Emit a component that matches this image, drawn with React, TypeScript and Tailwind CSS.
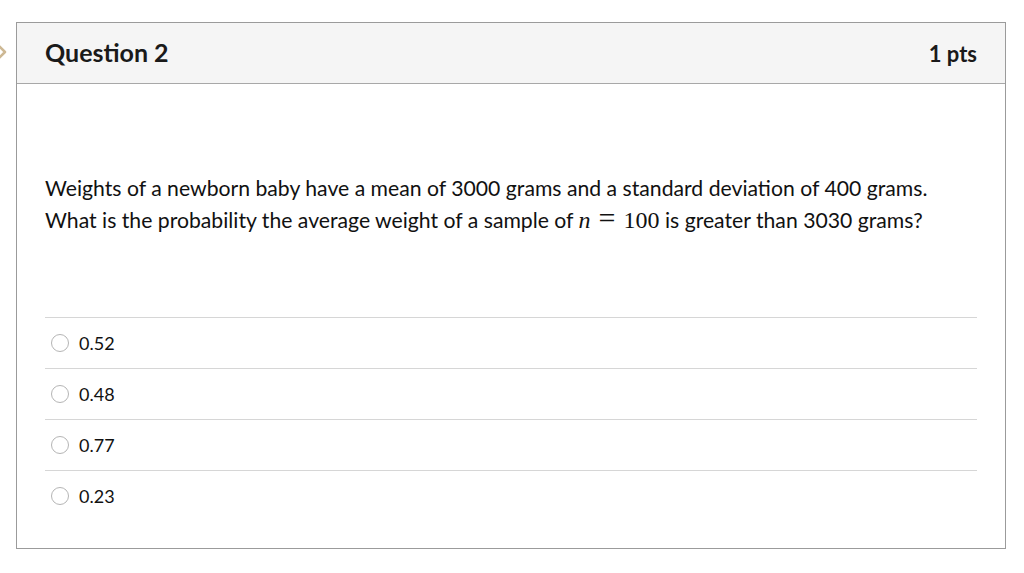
import React from 'react';

const answers = ['0.52', '0.48', '0.77', '0.23'];

const App: React.FC = () => {
  return (
    <div
      className="relative min-h-[573px] w-[1024px] bg-white pl-[16px] pt-[22px] text-[#2d3b45]"
      style={{ fontFamily: 'Lato, "Noto Sans", sans-serif' }}
    >
      <svg
        className="absolute left-[-4px] top-[44px]"
        width="12"
        height="16"
        viewBox="0 0 12 16"
        fill="none"
      >
        <path d="M3 2 L9 8 L3 14" stroke="#cdb894" strokeWidth="2.5" strokeLinecap="round" strokeLinejoin="round" />
      </svg>

      <div className="w-[990px] border border-[#9b9b9b]">
        <div className="flex h-[61px] items-center justify-between border-b border-[#a8a8a8] bg-[#f5f5f5] px-[28px]">
          <h2 className="text-[25px] font-bold text-[#1a1a1a]">Question 2</h2>
          <span className="text-[22px] font-bold text-[#1a1a1a]">1 pts</span>
        </div>

        <div className="px-[28px] pb-[27px] pt-[88px]">
          <p className="text-[21.2px] leading-[32px] text-[#111]">
            Weights of a newborn baby have a mean of 3000 grams and a standard deviation of 400 grams.
            <br />
            What is the probability the average weight of a sample of{' '}
            <span style={{ fontFamily: '"Liberation Serif", serif' }} className="text-[24px] leading-[24px]">
              <i>n</i>
              <span className="mx-[8px] text-[30px] leading-[24px]">=</span>
              100
            </span>{' '}
            is greater than 3030 grams?
          </p>

          <div className="mt-[81px]">
            {answers.map((a) => (
              <div
                key={a}
                className="flex h-[51px] items-center gap-[10px] border-t border-[#d6d6d6] pl-[6px] text-[18px] text-[#111]"
              >
                <span className="h-[18px] w-[18px] rounded-full border border-[#b5b5b5] bg-white" />
                <span>{a}</span>
              </div>
            ))}
          </div>
        </div>
      </div>
    </div>
  );
};

export default App;
